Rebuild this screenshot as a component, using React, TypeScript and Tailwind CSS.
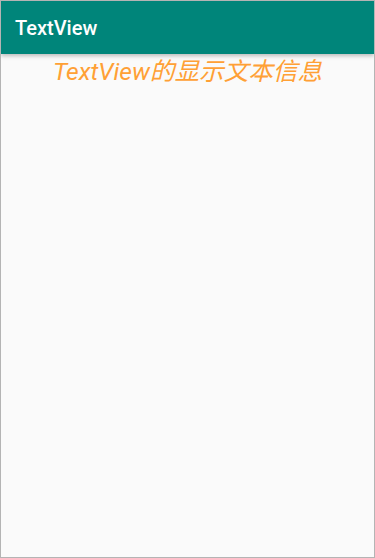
export default function App() {
  return (
    <div className="h-[558px] w-[375px] overflow-hidden border border-[#b4b4b4] bg-[#fafafa] font-['Roboto','Noto_Sans_CJK_SC',sans-serif]">
      <div className="relative z-10 flex h-[53px] items-center bg-[#00857a] px-[14px] shadow-[0_2px_4px_rgba(0,0,0,0.25)]">
        <span className="text-[20px] font-medium text-white">TextView</span>
      </div>
      <p className="mt-[2px] text-center text-[24.6px] italic leading-[32px] text-[#ffa035]">
        TextView的显示文本信息
      </p>
    </div>
  );
}
